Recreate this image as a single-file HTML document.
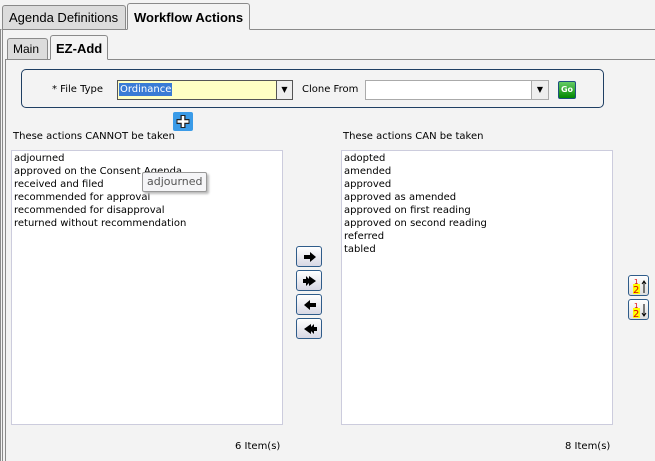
<!DOCTYPE html>
<html><head><style>
*{box-sizing:border-box;margin:0;padding:0}
body{width:655px;height:461px;background:#f3f3f3;font-family:"DejaVu Sans","Liberation Sans",sans-serif;font-size:10px;color:#000;position:relative;overflow:hidden}
.a{position:absolute;white-space:nowrap}
.tab{position:absolute;border:1px solid #8a8a8a;border-bottom:none;border-radius:3px 3px 0 0;font-family:"Liberation Sans",sans-serif;font-size:13px;padding-left:6px;white-space:nowrap;overflow:hidden}
.list{position:absolute;background:#fff;border:1px solid #ccd;padding:1px 2px;line-height:13px;font-size:10px;white-space:nowrap}
.btn{position:absolute;width:26px;height:21px;border:1px solid #2f5c8a;border-radius:3px;background:linear-gradient(#fff,#d8d8e4)}
.btn svg{position:absolute;left:6px;top:4px}
</style></head><body>
<div class="a" style="left:0;top:29px;width:655px;height:432px;border-top:1px solid #8a8a8a;border-left:3px double #8a8a8a"></div>
<div class="tab" style="left:2px;top:5px;width:124px;height:24px;background:#dcdcdc;line-height:24px">Agenda Definitions</div>
<div class="tab" style="left:127px;top:3px;width:123px;height:27px;background:#f3f3f3;line-height:28px;font-weight:bold;border-bottom:1px solid #f3f3f3">Workflow Actions</div>
<div class="a" style="left:5px;top:59px;width:650px;height:402px;border-top:1px solid #8a8a8a;border-left:1px solid #8a8a8a"></div>
<div class="tab" style="left:7px;top:38px;width:41px;height:21px;background:#dcdcdc;line-height:21px;font-size:12px;padding-left:5px">Main</div>
<div class="tab" style="left:50px;top:35px;width:58px;height:25px;background:#f3f3f3;line-height:25px;font-size:13px;font-weight:bold;padding-left:5px;border-bottom:1px solid #f3f3f3">EZ-Add</div>
<div class="a" style="left:21px;top:69px;width:583px;height:39px;border:1px solid #1f3f63;border-radius:5px"></div>
<div class="a" style="left:52px;top:84px">* File Type</div>
<div class="a" style="left:117px;top:80px;width:176px;height:20px;border:1px solid #555;background:#ffffc4"></div>
<div class="a" style="left:119px;top:83px;background:#3a7bd5;color:#fff;line-height:13px;padding:0 1px">Ordinance</div>
<div class="a" style="left:276px;top:80px;width:17px;height:20px;border:1px solid #555;background:#eee;font-size:8px;text-align:center;line-height:18px">▼</div>
<div class="a" style="left:302px;top:84px">Clone From</div>
<div class="a" style="left:365px;top:80px;width:184px;height:20px;border:1px solid #aaa;background:#fff"></div>
<div class="a" style="left:531px;top:80px;width:18px;height:20px;border:1px solid #aaa;background:#eee;font-size:8px;text-align:center;line-height:18px">▼</div>
<div class="a" style="left:558px;top:81px;width:18px;height:18px;border:1px solid #1f4f7f;border-radius:2px;background:linear-gradient(#6c6,#080);color:#fff;font-size:8px;font-weight:bold;text-align:center;line-height:16px">Go</div>
<div class="a" style="left:173px;top:112px;width:20px;height:19px;background:#3a9be8;border-radius:2px"><svg width="20" height="19" style="position:absolute;left:0;top:0"><path d="M10 3V16M3.5 9.5H16.5" stroke="#222" stroke-width="5"/><path d="M10 4V15M4.5 9.5H15.5" stroke="#fff" stroke-width="2.5"/></svg></div>
<div class="a" style="left:13px;top:131px">These actions CANNOT be taken</div>
<div class="a" style="left:343px;top:131px">These actions CAN be taken</div>
<div class="list" style="left:11px;top:150px;width:272px;height:275px">adjourned<br>approved on the Consent Agenda<br>received and filed<br>recommended for approval<br>recommended for disapproval<br>returned without recommendation</div>
<div class="list" style="left:341px;top:150px;width:272px;height:275px">adopted<br>amended<br>approved<br>approved as amended<br>approved on first reading<br>approved on second reading<br>referred<br>tabled</div>
<div class="a" style="left:142px;top:172px;width:65px;height:20px;border:1px solid #999;border-radius:2px;background:#f5f5f7;color:#555;font-size:11px;line-height:18px;padding-left:4px;box-shadow:2px 2px 2px #bbb">adjourned</div>
<div class="btn" style="left:296px;top:246px"><svg width="14" height="12"><path d="M1 4H7V1L13 6L7 11V8H1Z" fill="#000"/></svg></div>
<div class="btn" style="left:296px;top:270px"><svg width="14" height="12"><path d="M0 4H3V1L8 6L3 11V8H0Z M6 4V1L13 6L6 11V8Z" fill="#000"/></svg></div>
<div class="btn" style="left:296px;top:294px"><svg width="14" height="12"><path d="M13 4H7V1L1 6L7 11V8H13Z" fill="#000"/></svg></div>
<div class="btn" style="left:296px;top:318px"><svg width="14" height="12"><path d="M14 4H11V1L6 6L11 11V8H14Z M8 4V1L1 6L8 11V8Z" fill="#000"/></svg></div>
<div class="btn" style="left:628px;top:275px;width:21px;background:linear-gradient(#fff,#ddd)"><svg width="19" height="19" style="left:1px;top:0"><rect x="3" y="8" width="7" height="10" fill="#ff0"/><text x="4" y="8" font-size="7" fill="#d00" font-family="DejaVu Sans">1</text><text x="3" y="17" font-size="10" fill="#d00" font-family="DejaVu Sans">2</text><path d="M14 5V17M12 8L14 5L16 8" stroke="#000" fill="none"/></svg></div>
<div class="btn" style="left:628px;top:299px;width:21px;background:linear-gradient(#fff,#ddd)"><svg width="19" height="19" style="left:1px;top:0"><rect x="3" y="8" width="7" height="10" fill="#ff0"/><text x="4" y="8" font-size="7" fill="#d00" font-family="DejaVu Sans">1</text><text x="3" y="17" font-size="10" fill="#d00" font-family="DejaVu Sans">2</text><path d="M14 4V16M12 13L14 16L16 13" stroke="#000" fill="none"/></svg></div>
<div class="a" style="left:235px;top:441px">6 Item(s)</div>
<div class="a" style="left:565px;top:441px">8 Item(s)</div>
</body></html>
